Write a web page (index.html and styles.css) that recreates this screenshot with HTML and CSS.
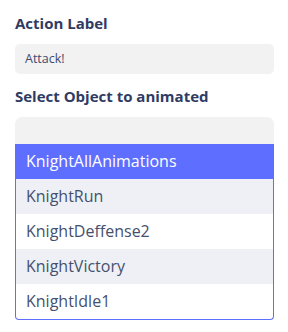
FILE: index.html
```html
<!DOCTYPE html>
<html lang="en">
<head>
  <meta charset="UTF-8" />
  <meta name="viewport" content="width=device-width, initial-scale=1.0"/>
  <title>Action</title>
  <link rel="stylesheet" href="styles.css">
</head>
<body>
  <div class="panel">
    <label class="field-label">Action Label</label>
    <div class="text-input">Attack!</div>

    <label class="field-label">Select Object to animated</label>
    <div class="select">
      <div class="select-box"></div>
      <ul class="options">
        <li class="selected">KnightAllAnimations</li>
        <li class="alt">KnightRun</li>
        <li>KnightDeffense2</li>
        <li class="alt">KnightVictory</li>
        <li>KnightIdle1</li>
      </ul>
    </div>
  </div>
</body>
</html>
```

FILE: styles.css
```css
body {
  margin: 0;
  background: #ffffff;
  font-family: "Open Sans", Lato, sans-serif;
  color: #34406b;
}
.panel {
  padding: 13px 14px 0 15px;
}
.field-label {
  display: block;
  font-size: 15px;
  font-weight: bold;
  color: #2f3b63;
  line-height: 20px;
  margin-bottom: 11px;
}
.text-input {
  height: 30px;
  line-height: 30px;
  background: #f2f2f2;
  border-radius: 5px;
  padding: 0 10px;
  font-size: 12.5px;
  color: #3e4a70;
  margin-bottom: 12px;
}
.select-box {
  height: 27px;
  background: #f2f2f2;
  border-radius: 7px 7px 0 0;
}
.options {
  list-style: none;
  margin: 0;
  padding: 0;
  border: 1px solid #5e6eff;
  border-top: none;
  border-radius: 0 0 4px 4px;
  overflow: hidden;
}
.options li {
  height: 35px;
  line-height: 35px;
  padding: 0 10px;
  font-size: 16px;
  color: #45506f;
}
.options li.alt {
  background: #eef0f5;
}
.options li.selected {
  background: #5e6eff;
  color: #ffffff;
  margin: 0 -1px;
  padding: 0 11px;
}
```
